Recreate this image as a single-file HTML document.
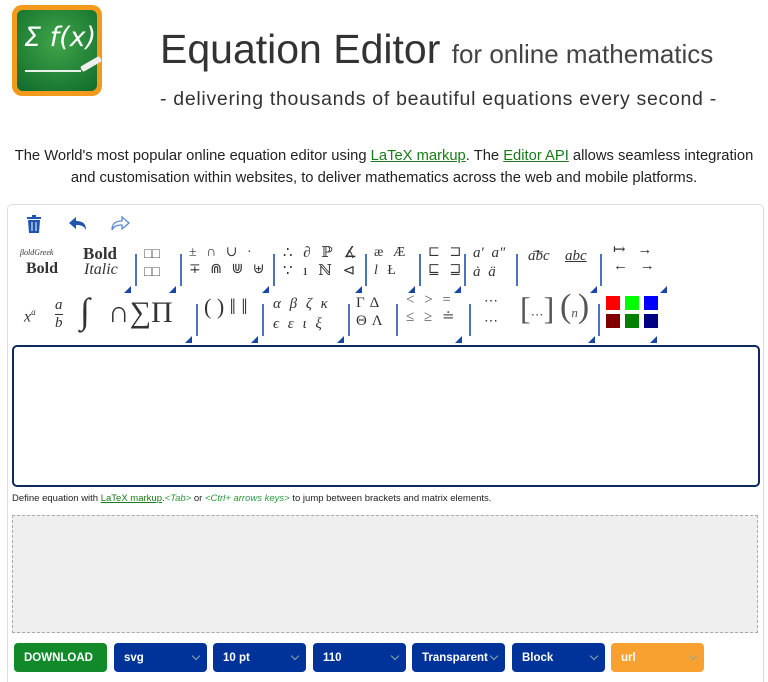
<!DOCTYPE html>
<html style="height:682px;overflow:hidden"><head><meta charset="utf-8"><style>
body{margin:0;width:768px;height:682px;overflow:hidden;background:#fff;font-family:"Liberation Sans",sans-serif;position:relative;color:#222}
.a{position:absolute}
.s{font-family:"Liberation Serif","DejaVu Serif",serif;color:#333}
.sep{position:absolute;width:1.5px;background:#4a72bd}
.tri{position:absolute;width:0;height:0;border-left:7px solid transparent;border-bottom:7px solid #1747a6}
.btn{position:absolute;top:643px;height:29px;width:93px;border-radius:4px;background:#003399;color:#fff;font-size:11.5px;font-weight:bold;line-height:31px;box-sizing:border-box;padding-left:10px}
.btn i{position:absolute;right:8px;top:10px;width:5px;height:5px;border-right:1.5px solid #8aa;border-bottom:1.5px solid #8aa;transform:rotate(45deg)}
.sw{position:absolute;width:14px;height:14px}
</style></head><body>
<div class="a" style="left:12px;top:5px;width:90px;height:91px;border-radius:10px;background:#f39a1c"></div>
<div class="a" style="left:17px;top:10px;width:80px;height:81px;border-radius:6px;background:radial-gradient(circle at 50% 40%,#3fa54a,#0f6b2a)"></div>
<div class="a" style="left:24px;top:22px;color:#fff;font-size:27px;font-style:italic;font-family:'DejaVu Sans',sans-serif">&Sigma; f(x)</div>
<div class="a" style="left:25px;top:70px;width:56px;height:2px;background:#e8f0e8"></div>
<div class="a" style="left:80px;top:61px;width:22px;height:6px;background:#eee;transform:rotate(-30deg);border-radius:2px"></div>
<div class="a" style="left:160px;top:26px;font-size:41px;color:#333;white-space:nowrap">Equation Editor <span style="font-size:26px;color:#444">for online mathematics</span></div>
<div class="a" style="left:160px;top:88px;font-size:19.5px;letter-spacing:0.7px;color:#333;white-space:nowrap">- delivering thousands of beautiful equations every second -</div>
<div class="a" style="left:0;width:768px;top:145px;text-align:center;font-size:14.75px;line-height:22px;color:#222;white-space:nowrap">The World's most popular online equation editor using <u style="color:#1a7a1a">LaTeX markup</u>. The <u style="color:#1a7a1a">Editor API</u> allows seamless integration<br>and customisation within websites, to deliver mathematics across the web and mobile platforms.</div>
<div class="a" style="left:7px;top:204px;width:755px;height:490px;border:1px solid #ddd;border-radius:5px"></div>
<svg class="a" style="left:26px;top:214px" width="16" height="20" viewBox="0 0 16 20"><rect x="1" y="3" width="14" height="2" fill="#1d55b0"/><rect x="6" y="1" width="4" height="2" fill="#1d55b0"/><path d="M2 6h12l-1 13H3z" fill="#1d55b0"/><path d="M6 8v9M10 8v9" stroke="#fff"/></svg>
<svg class="a" style="left:68px;top:216px" width="20" height="16" viewBox="0 0 20 16"><path d="M8 1L1 7l7 6V9c5 0 8 1 10 5 0-6-3-9-10-9z" fill="#1d55b0"/></svg>
<svg class="a" style="left:110px;top:216px" width="20" height="16" viewBox="0 0 20 16"><path d="M12 1l7 6-7 6V9C7 9 4 10 2 14c0-6 3-9 10-9z" fill="none" stroke="#5a8ad0" stroke-width="1.3"/></svg>
<div class="a s" style="left:20px;top:248px;font-size:8px;font-style:italic">&beta;oldGreek</div>
<div class="a s" style="left:26px;top:260px;font-size:16px;font-weight:bold">Bold</div>
<div class="a s" style="left:83px;top:244px;font-size:17px;font-weight:bold">Bold</div>
<div class="a s" style="left:84px;top:261px;font-size:16px;font-style:italic">Italic</div>
<div class="sep" style="left:135px;top:254px;height:32px"></div><div class="tri" style="left:124px;top:286px"></div>
<div class="a" style="left:144px;top:244px;font-size:14px;line-height:18px;color:#555;letter-spacing:-1px">□□<br>□□</div>
<div class="sep" style="left:180px;top:254px;height:32px"></div><div class="tri" style="left:169px;top:286px"></div>
<div class="a s" style="left:189px;top:244px;font-size:14px;line-height:17px;word-spacing:6px">± ∩ ∪ ·<br>∓ ⋒ ⋓ ⊎</div>
<div class="sep" style="left:273px;top:254px;height:32px"></div><div class="tri" style="left:262px;top:286px"></div>
<div class="a s" style="left:283px;top:244px;font-size:15px;line-height:18px;word-spacing:7px">∴ ∂ ℙ ∡<br>∵ ı ℕ ⊲</div>
<div class="sep" style="left:365px;top:254px;height:32px"></div><div class="tri" style="left:355px;top:286px"></div>
<div class="a s" style="left:374px;top:244px;font-size:14px;line-height:18px;word-spacing:6px">æ Æ<br><i>l</i> Ł</div>
<div class="sep" style="left:419px;top:254px;height:32px"></div><div class="tri" style="left:408px;top:286px"></div>
<div class="a s" style="left:428px;top:244px;font-size:14px;line-height:18px;word-spacing:6px">⊏ ⊐<br>⊑ ⊒</div>
<div class="sep" style="left:464px;top:254px;height:32px"></div><div class="tri" style="left:454px;top:286px"></div>
<div class="a s" style="left:473px;top:244px;font-size:15px;line-height:19px;font-style:italic;word-spacing:4px">a′ a″<br>ȧ ä</div>
<div class="sep" style="left:516px;top:254px;height:32px"></div><div class="tri" style="left:590px;top:286px"></div>
<div class="a s" style="left:528px;top:248px;font-size:15px;font-style:italic">a͠bc</div>
<div class="a s" style="left:565px;top:248px;font-size:15px;font-style:italic;text-decoration:underline">abc</div>
<div class="sep" style="left:600px;top:254px;height:32px"></div><div class="tri" style="left:660px;top:286px"></div>
<div class="a s" style="left:613px;top:242px;font-size:15px;line-height:16px;word-spacing:8px">↦ →<br>← →</div>
<div class="a s" style="left:24px;top:307px;font-size:16px;font-style:italic">x<sup style="font-size:9px">a</sup></div>
<div class="a s" style="left:55px;top:296px;font-size:15px;font-style:italic;text-align:center;line-height:18px">a<br><span style="border-top:1px solid #333">b</span></div>
<div class="a s" style="left:80px;top:290px;font-size:36px">∫</div>
<div class="a s" style="left:108px;top:296px;font-size:30px">∩∑Π</div>
<div class="sep" style="left:196px;top:304px;height:32px"></div><div class="tri" style="left:185px;top:336px"></div>
<div class="a s" style="left:204px;top:294px;font-size:22px">( ) ‖ ‖</div>
<div class="sep" style="left:262px;top:304px;height:32px"></div><div class="tri" style="left:251px;top:336px"></div>
<div class="a s" style="left:273px;top:294px;font-size:15px;line-height:20px;font-style:italic;word-spacing:5px">α β ζ κ<br>ϵ ε ι ξ</div>
<div class="sep" style="left:348px;top:304px;height:32px"></div><div class="tri" style="left:337px;top:336px"></div>
<div class="a s" style="left:356px;top:294px;font-size:15px;line-height:18px;word-spacing:2px">Γ Δ<br>Θ Λ</div>
<div class="sep" style="left:396px;top:304px;height:32px"></div><div class="tri" style="left:455px;top:336px"></div>
<div class="a s" style="left:406px;top:292px;font-size:15px;line-height:17px;word-spacing:6px;color:#555">&lt; &gt; =<br>≤ ≥ ≐</div>
<div class="sep" style="left:469px;top:304px;height:32px"></div><div class="tri" style="left:588px;top:336px"></div>
<div class="a s" style="left:484px;top:292px;font-size:14px;line-height:20px">⋯<br>⋯</div>
<div class="a s" style="left:520px;top:290px;font-size:32px;color:#555">[<span style="font-size:13px">⋯</span>]</div>
<div class="a s" style="left:560px;top:288px;font-size:34px;color:#555">(<span style="font-size:13px;font-style:italic">n</span>)</div>
<div class="sep" style="left:598px;top:304px;height:32px"></div><div class="tri" style="left:650px;top:336px"></div>
<div class="sw" style="left:606px;top:296px;background:red"></div><div class="sw" style="left:625px;top:296px;background:#0f0"></div><div class="sw" style="left:644px;top:296px;background:#00f"></div>
<div class="sw" style="left:606px;top:314px;background:#800000"></div><div class="sw" style="left:625px;top:314px;background:green"></div><div class="sw" style="left:644px;top:314px;background:navy"></div>
<div class="a" style="left:12px;top:345px;width:744px;height:138px;border:2px solid #0d2a5c;border-radius:5px"></div>
<div class="a" style="left:12px;top:493px;font-size:9.5px;color:#222;white-space:nowrap">Define equation with <u style="color:#1a7a1a">LaTeX markup</u>.<i style="color:#2a9a3a">&lt;Tab&gt;</i> or <i style="color:#2a9a3a">&lt;Ctrl+ arrows keys&gt;</i> to jump between brackets and matrix elements.</div>
<div class="a" style="left:12px;top:515px;width:744px;height:116px;border:1px dashed #aaa;background:#efefef"></div>
<div class="btn" style="left:14px;background:#138a2a">DOWNLOAD</div>
<div class="btn" style="left:114px">svg<i></i></div>
<div class="btn" style="left:213px">10 pt<i></i></div>
<div class="btn" style="left:313px">110<i></i></div>
<div class="btn" style="left:412px">Transparent<i></i></div>
<div class="btn" style="left:512px">Block<i></i></div>
<div class="btn" style="left:611px;background:#f8a030">url<i></i></div>
</body></html>
